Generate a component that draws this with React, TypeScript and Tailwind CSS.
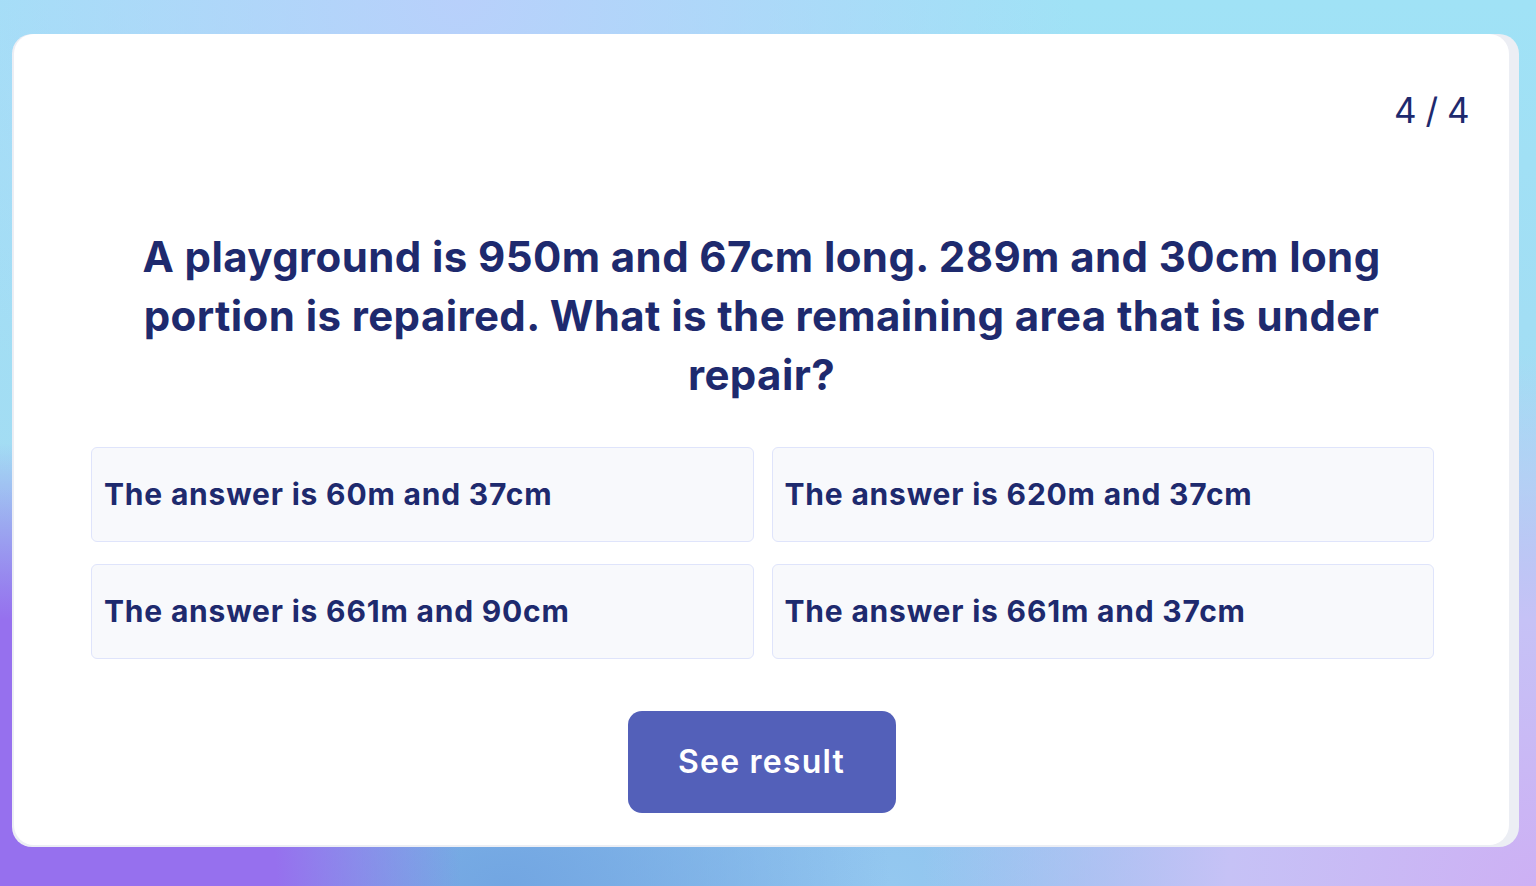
import React from "react";

const options = [
  "The answer is 60m and 37cm",
  "The answer is 620m and 37cm",
  "The answer is 661m and 90cm",
  "The answer is 661m and 37cm",
];

export default function App() {
  return (
    <div
      className="w-[1536px] h-[886px] overflow-hidden pt-[34px] pl-[12px] pr-[17px] pb-[39px] bg-[radial-gradient(ellipse_30%_50%_at_0%_100%,#9670ee_0%,#9670ee_60%,transparent_100%),radial-gradient(ellipse_40%_60%_at_100%_100%,#cdb0f4_0%,#c6c2f6_50%,transparent_100%),radial-gradient(ellipse_25%_30%_at_33%_100%,#72a6e2_0%,transparent_100%),radial-gradient(ellipse_30%_40%_at_58%_100%,#94c8f0_0%,transparent_100%),radial-gradient(ellipse_40%_60%_at_30%_0%,#b8d0fb_0%,transparent_100%),linear-gradient(180deg,#a0e2f6_0%,#a3dcf3_55%,#86b8ea_100%)]"
      style={{ fontFamily: "Inter, 'Noto Sans', sans-serif" }}
    >
      <div className="h-full rounded-[20px] bg-[#eceef4] pl-[2px] pb-[2px] pr-[10px]">
        <div className="h-full rounded-[20px] bg-white flex flex-col pt-[57px]">
          <div className="flex justify-end pr-[40px]">
            <span className="text-[35px] leading-[38px] text-[#1e2a6e] tracking-[-0.5px]">4 / 4</span>
          </div>
          <h1 className="mt-[98px] mx-auto w-[1300px] text-center text-[42px] leading-[59px] font-bold text-[#1e2a6e] tracking-[0.4px]">
            A playground is 950m and 67cm long. 289m and 30cm long portion is repaired. What is the remaining area that is under repair?
          </h1>
          <div className="mt-[43px] pl-[77px] pr-[75px] grid grid-cols-2 gap-x-[18px] gap-y-[22px]">
            {options.map((o) => (
              <button
                key={o}
                className="h-[95px] rounded-[6px] border border-[#dfe4fb] bg-[#f8f9fc] flex items-center pl-[12px] text-left text-[30px] font-bold text-[#1e2a6e] tracking-[0.8px]"
              >
                {o}
              </button>
            ))}
          </div>
          <div className="mt-[52px] flex justify-center">
            <button className="w-[268px] h-[102px] rounded-[14px] bg-[#5360b9] text-white text-[32px] font-semibold tracking-[1.2px]">
              See result
            </button>
          </div>
        </div>
      </div>
    </div>
  );
}
